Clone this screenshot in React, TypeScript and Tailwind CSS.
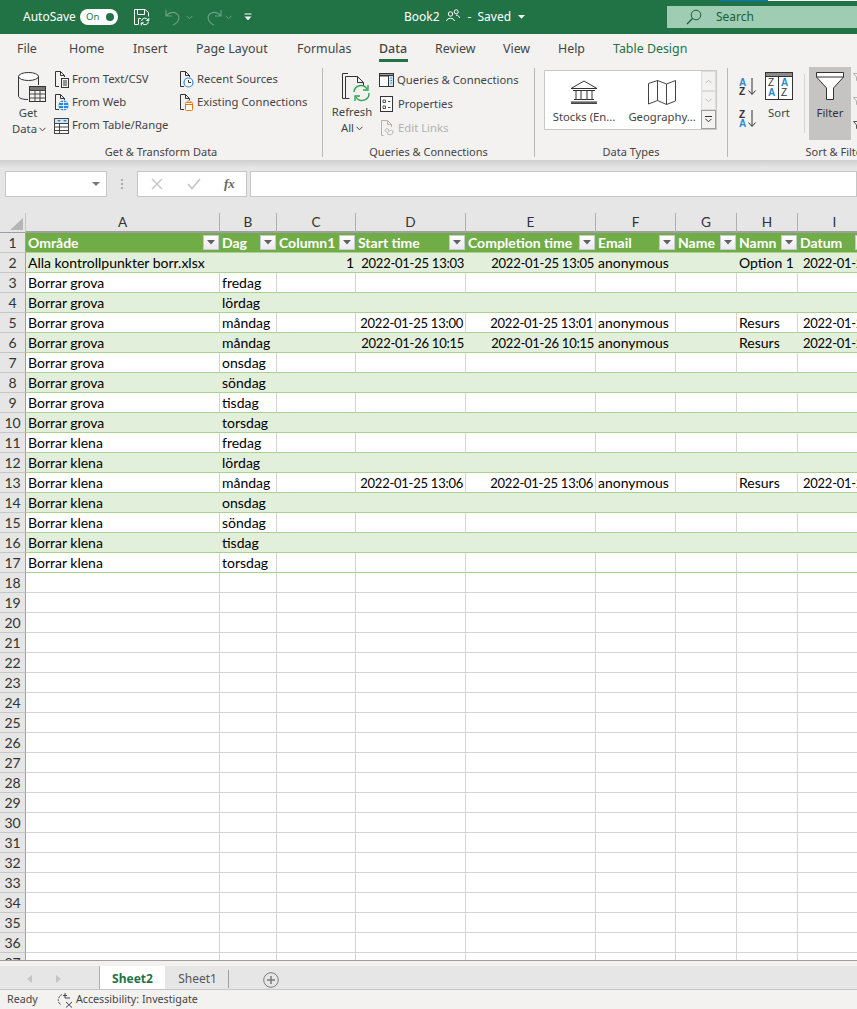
import type { ReactNode } from "react";

const COLS = "grid grid-cols-[26px_194px_57px_79px_110px_130px_80px_61px_61px_74px]";

type Row = string[];

const HEADERS = ["Område", "Dag", "Column1", "Start time", "Completion time", "Email", "Name", "Namn", "Datum"];
const LETTERS = ["A", "B", "C", "D", "E", "F", "G", "H", "I"];

const DATA: Row[] = [
  ["Alla kontrollpunkter borr.xlsx", "", "1", "2022-01-25 13:03", "2022-01-25 13:05", "anonymous", "", "Option 1", "2022-01-25"],
  ["Borrar grova", "fredag"],
  ["Borrar grova", "lördag"],
  ["Borrar grova", "måndag", "", "2022-01-25 13:00", "2022-01-25 13:01", "anonymous", "", "Resurs", "2022-01-25"],
  ["Borrar grova", "måndag", "", "2022-01-26 10:15", "2022-01-26 10:15", "anonymous", "", "Resurs", "2022-01-26"],
  ["Borrar grova", "onsdag"],
  ["Borrar grova", "söndag"],
  ["Borrar grova", "tisdag"],
  ["Borrar grova", "torsdag"],
  ["Borrar klena", "fredag"],
  ["Borrar klena", "lördag"],
  ["Borrar klena", "måndag", "", "2022-01-25 13:06", "2022-01-25 13:06", "anonymous", "", "Resurs", "2022-01-25"],
  ["Borrar klena", "onsdag"],
  ["Borrar klena", "söndag"],
  ["Borrar klena", "tisdag"],
  ["Borrar klena", "torsdag"],
];

const EMPTY_ROWS = Array.from({ length: 20 }, (_, i) => i + 18);

function Chevron({ className = "", color = "#444" }: { className?: string; color?: string }) {
  return (
    <svg width="7" height="5" viewBox="0 0 7 5" className={className}>
      <path d="M0.5 0.8 L3.5 3.8 L6.5 0.8" fill="none" stroke={color} strokeWidth="1" />
    </svg>
  );
}

function DocIcon({ children }: { children?: ReactNode }) {
  return (
    <svg width="15" height="17" viewBox="0 0 15 17" className="shrink-0">
      <path d="M1.5 15.5 V0.5 H6.5 L10.5 4.5 V6 M6.5 0.5 V4.5 H10.5 M1.5 15.5 H5" fill="none" stroke="#333" />
      {children}
    </svg>
  );
}

function TableIcon() {
  return (
    <svg width="15" height="16" viewBox="0 0 15 16" className="shrink-0">
      <rect x="0.5" y="0.5" width="14" height="15" fill="#fff" stroke="#444" />
      <rect x="1" y="1" width="13" height="4" fill="#d5e6f3" />
      <path d="M3 2 L5 4 L7 2 Z M9 2 L11 4 L13 2 Z" fill="#2b88d8" />
      <path d="M0.5 5.5 H14.5 M0.5 9 H14.5 M0.5 12.5 H14.5 M5.5 5.5 V15.5" stroke="#444" fill="none" />
    </svg>
  );
}

function SmallFunnel({ color }: { color: string }) {
  return (
    <svg width="9" height="8" viewBox="0 0 9 8">
      <path d="M0.5 0.5 H8.5 L5.5 4 V7.5 H3.5 V4 Z" fill="none" stroke={color} />
    </svg>
  );
}

function Cmd({ icon, label }: { icon: ReactNode; label: string }) {
  return (
    <div className="flex h-[23px] items-center gap-[3px] whitespace-nowrap text-[#444]">
      <span className="flex w-[15px] justify-center">{icon}</span>
      <span>{label}</span>
    </div>
  );
}

function Group({ label, className, children }: { label: string; className: string; children: ReactNode }) {
  return (
    <div className={`relative flex shrink-0 flex-col ${className}`}>
      <div className="flex h-[76px]">{children}</div>
      <div className="h-[17px] text-center text-[11px] leading-[17px] whitespace-nowrap text-[#444]">{label}</div>
    </div>
  );
}

function TabLabel({ w, children, active, accent }: { w: string; children: string; active?: boolean; accent?: boolean }) {
  return (
    <div className={`relative ${w} whitespace-nowrap leading-[30px] ${accent ? "text-[#217346]" : "text-[#444]"} ${active ? "font-medium text-[#333]" : ""}`}>
      {children}
      {active && <div className="absolute top-[25px] left-0 h-[3px] w-[29px] bg-[#217346]" />}
    </div>
  );
}

function FilterButton() {
  return (
    <div className="absolute top-[2px] right-[1px] flex h-[15px] w-[16px] items-center justify-center border border-[#c9c9d0] bg-gradient-to-b from-white to-[#e9e9ee]">
      <svg width="8" height="5" viewBox="0 0 8 5">
        <path d="M0 0 H8 L4 4.5 Z" fill="#5f5f5f" />
      </svg>
    </div>
  );
}

function HeaderCell({ children }: { children: string }) {
  return (
    <div className="relative h-[20px] border-b border-[#a9d08e] bg-[#70ad47] pl-[2px] font-['Lato',sans-serif] text-[14px] leading-[19px] font-bold whitespace-nowrap text-white">
      {children}
      <FilterButton />
    </div>
  );
}

function RowNumber({ n }: { n: number }) {
  return (
    <div className="h-[20px] border-r border-b border-r-[#9f9f9f] border-b-[#c6c6c6] bg-[#e6e6e6] text-center font-['Lato',sans-serif] text-[14px] leading-[19px] text-[#333]">
      {n}
    </div>
  );
}

function DataRow({ row, n }: { row: Row; n: number }) {
  const band = n % 2 === 0;
  return (
    <div className={COLS}>
      <RowNumber n={n} />
      {LETTERS.map((l, i) => {
        const isDate = i === 3 || i === 4 || i === 8;
        const alignRight = i === 2 || i === 3 || i === 4;
        return (
          <div
            key={l}
            className={`h-[20px] border-b border-b-[#a9d08e] px-[2px] font-['Lato',sans-serif] whitespace-nowrap text-black ${band ? "bg-[#e2efda]" : "border-r border-r-[#d4d4d4] bg-white"} ${alignRight ? "text-right" : "text-left"} ${isDate ? "text-[13px] leading-[20px] tracking-[-0.25px]" : "text-[14px] leading-[19px]"} ${i === 8 ? "pl-[5px]" : ""}`}
          >
            {row[i] ?? ""}
          </div>
        );
      })}
    </div>
  );
}

export default function App() {
  return (
    <div className="relative flex h-[1009px] w-[857px] flex-col overflow-hidden bg-[#f3f2f1] font-['Noto_Sans',sans-serif] text-[12px]">
      {/* title bar */}
      <div className="relative flex h-[34px] shrink-0 items-center bg-[#217346] pl-[23px] text-white">
        <span className="w-[57px] text-[12px]">AutoSave</span>
        <div className="flex h-[16px] w-[38px] items-center justify-between rounded-full bg-white pr-[4px] pl-[6px] text-[9.5px] text-[#217346]">
          <span>On</span>
          <span className="h-[8px] w-[8px] rounded-full bg-[#217346]" />
        </div>
        <svg width="18" height="18" viewBox="0 0 18 18" className="ml-[15px]">
          <path d="M5.5 16.5 H1.5 V1.5 H12 L15.5 4.5 V8.5" fill="none" stroke="#fff" />
          <path d="M4.5 1.5 V6.5 H11.5 V1.5 M5.5 16 V10.5 H8" fill="none" stroke="#fff" />
          <path d="M8.5 13 A3.5 3.5 0 0 1 15 12 M15.5 13.5 A3.5 3.5 0 0 1 9 15" fill="none" stroke="#fff" />
          <path d="M15.8 10 V12.6 H13.2 M8.2 17.5 V14.8 H10.8" fill="none" stroke="#fff" />
        </svg>
        <svg width="17" height="18" viewBox="0 0 17 18" className="ml-[14px]">
          <path d="M1 2 V8 H7 M1.5 7.5 C4 4.5 8 3.5 11.5 5.5 C15.5 8 14.5 14 8 17" fill="none" stroke="#6d9f83" strokeWidth="1.2" />
        </svg>
        <Chevron className="ml-[4px]" color="#6d9f83" />
        <svg width="17" height="18" viewBox="0 0 17 18" className="ml-[12px]">
          <path d="M16 2 V8 H10 M15.5 7.5 C13 4.5 9 3.5 5.5 5.5 C1.5 8 2.5 14 9 17" fill="none" stroke="#6d9f83" strokeWidth="1.2" />
        </svg>
        <Chevron className="ml-[3px]" color="#6d9f83" />
        <svg width="8" height="8" viewBox="0 0 8 8" className="ml-[12px]">
          <path d="M0.5 1 H7.5" stroke="#fff" />
          <path d="M0.5 3.5 H7.5 L4 7.2 Z" fill="#fff" />
        </svg>
        <span className="ml-[152px] text-[12px]">Book2</span>
        <svg width="14" height="13" viewBox="0 0 14 13" className="ml-[6px] -translate-y-[2px]">
          <circle cx="4.5" cy="5" r="2.2" fill="none" stroke="#fff" />
          <path d="M0.5 12 C1 8.5 8 8.5 8.5 12" fill="none" stroke="#fff" />
          <circle cx="10.2" cy="2.8" r="2" fill="none" stroke="#fff" />
          <path d="M10 6.2 C12 6 13.5 7.5 13.5 9" fill="none" stroke="#fff" />
        </svg>
        <span className="ml-[8px] text-[12px]">-</span>
        <span className="ml-[6px] text-[12px]">Saved</span>
        <svg width="7" height="4" viewBox="0 0 7 4" className="ml-[7px]">
          <path d="M0 0 H7 L3.5 3.8 Z" fill="#fff" />
        </svg>
        <div className="absolute top-[6px] right-0 flex h-[22px] w-[190px] items-center bg-[#9fcdb3] pl-[19px] text-[12px] text-[#1e5c3a]">
          <svg width="16" height="16" viewBox="0 0 16 16">
            <circle cx="10" cy="6" r="4.8" fill="none" stroke="#1e5c3a" />
            <path d="M6.5 9.5 L1 15" stroke="#1e5c3a" strokeWidth="1.2" />
          </svg>
          <span className="ml-[14px]">Search</span>
        </div>
        <div className="absolute top-0 right-0 flex h-[1px] w-[137px]">
          <div className="w-[48px] bg-[#0078d4]" />
          <div className="flex-1 bg-white" />
        </div>
      </div>

      {/* tabs */}
      <div className="flex h-[33px] shrink-0 pl-[17px] text-[12.4px]">
        <TabLabel w="w-[52px]">File</TabLabel>
        <TabLabel w="w-[64px]">Home</TabLabel>
        <TabLabel w="w-[63px]">Insert</TabLabel>
        <TabLabel w="w-[101px]">Page Layout</TabLabel>
        <TabLabel w="w-[82px]">Formulas</TabLabel>
        <TabLabel w="w-[56px]" active>Data</TabLabel>
        <TabLabel w="w-[68px]">Review</TabLabel>
        <TabLabel w="w-[55px]">View</TabLabel>
        <TabLabel w="w-[55px]">Help</TabLabel>
        <TabLabel w="w-[90px]" accent>Table Design</TabLabel>
      </div>

      {/* ribbon */}
      <div className="flex h-[93px] shrink-0 text-[11.3px] text-[#444]">
        <Group label="Get & Transform Data" className="w-[322px]">
          <div className="flex w-[54px] flex-col items-center pt-[5px] pl-[4px] leading-[16px]">
            <svg width="28" height="30" viewBox="0 0 28 30" className="translate-x-[3px]">
              <ellipse cx="10.5" cy="4.5" rx="10" ry="4" fill="#fff" stroke="#333" />
              <path d="M0.5 4.5 V24 C0.5 26 4 27.5 10 27.5 M20.5 4.5 V13" fill="none" stroke="#333" />
              <rect x="11.5" y="14.5" width="16" height="15" fill="#f3f2f1" stroke="#333" />
              <rect x="12" y="15" width="15" height="3" fill="#777" />
              <path d="M11.5 18.5 H27.5 M11.5 22 H27.5 M11.5 26 H27.5 M17 18.5 V29.5 M22 18.5 V29.5" fill="none" stroke="#444" />
            </svg>
            <div className="mt-[3px] -translate-x-[1px]">Get</div>
            <div className="flex items-center gap-[2px]">Data<Chevron /></div>
          </div>
          <div className="w-[125px] pt-[1px]">
            <Cmd label="From Text/CSV" icon={<DocIcon><rect x="7.5" y="7.5" width="7" height="9" fill="#f3f2f1" stroke="#333" /><path d="M9 10 H13 M9 12 H13 M9 14 H13" stroke="#333" /></DocIcon>} />
            <Cmd label="From Web" icon={<DocIcon><circle cx="9.5" cy="11.5" r="5" fill="#2b88d8" /><path d="M4.5 11.5 H14.5 M9.5 6.5 V16.5 M6 8.5 H13 M6 14.5 H13" stroke="#fff" strokeWidth="0.8" /></DocIcon>} />
            <Cmd label="From Table/Range" icon={<TableIcon />} />
          </div>
          <div className="flex-1 pt-[1px]">
            <Cmd label="Recent Sources" icon={<DocIcon><circle cx="9.5" cy="11.5" r="4.5" fill="#fff" stroke="#2b88d8" strokeWidth="1.2" /><path d="M9.5 9 V11.5 H12" fill="none" stroke="#333" /></DocIcon>} />
            <Cmd label="Existing Connections" icon={<DocIcon><rect x="6.5" y="8.5" width="7" height="8" rx="1" fill="#fff" stroke="#e8760e" /><path d="M6.5 10.5 H13.5 M8 8.5 C8 6 12 6 12 8.5" fill="none" stroke="#e8760e" /></DocIcon>} />
          </div>
        </Group>
        <div className="mt-[1px] mb-[3px] w-[1px] shrink-0 bg-[#b8b8b8]" />
        <Group label="Queries & Connections" className="w-[211px]">
          <div className="flex w-[56px] flex-col items-center pt-[5px] pl-[2px] leading-[16px]">
            <svg width="30" height="30" viewBox="0 0 30 30" className="translate-x-[4px]">
              <path d="M4.5 26.5 H1.5 V1.5 H7" fill="none" stroke="#333" />
              <path d="M8.5 26.5 H4.5 V4.5 H16.5 L22.5 10.5 V14 M16.5 4.5 V10.5 H22.5" fill="none" stroke="#333" />
              <path d="M13 20 A7 7 0 0 1 26 17 M28 21 A7 7 0 0 1 15 25" fill="none" stroke="#2ea44f" strokeWidth="1.4" />
              <path d="M27 13 V18 H22 M14 29 V24 H19" fill="none" stroke="#2ea44f" strokeWidth="1.4" />
            </svg>
            <div className="mt-[2px]">Refresh</div>
            <div className="flex items-center gap-[2px]">All<Chevron /></div>
          </div>
          <div className="flex-1 pt-[1px] leading-[24px]">
            <div className="flex h-[24px] items-center gap-[3px] whitespace-nowrap">
              <svg width="15" height="14" viewBox="0 0 15 14">
                <rect x="0.5" y="0.5" width="14" height="13" fill="#fff" stroke="#333" />
                <path d="M0.5 2.5 H14.5" stroke="#333" strokeWidth="2" />
                <rect x="10" y="3" width="4" height="10" fill="#cfe4f5" />
                <path d="M11.5 5 H13 M11.5 7.5 H13 M11.5 10 H13" stroke="#2b88d8" />
                <path d="M9.5 3 V13.5" stroke="#333" />
              </svg>
              <span>Queries & Connections</span>
            </div>
            <div className="flex h-[24px] items-center gap-[4px] whitespace-nowrap">
              <svg width="14" height="16" viewBox="0 0 14 16" className="ml-[1px]">
                <rect x="0.5" y="0.5" width="12" height="15" fill="#fff" stroke="#333" />
                <path d="M3 4 H5.5 V6.5 H3 Z M3 10 H5.5 V12.5 H3 Z M8 5.5 H10.5 M8 11.5 H10.5" fill="none" stroke="#555" />
              </svg>
              <span>Properties</span>
            </div>
            <div className="flex h-[24px] items-center gap-[3px] whitespace-nowrap text-[#b1b1b1]">
              <svg width="15" height="16" viewBox="0 0 15 16" className="ml-[1px]">
                <path d="M3.5 15.5 H1.5 V0.5 H7.5 L11.5 4.5 V7 M7.5 0.5 V4.5 H11.5" fill="none" stroke="#b1b1b1" />
                <path d="M5 11 C5 8 9 8 9 11 C9 13 6 13 6 11 M7 13.5 C9 15.5 13 15 13 12 C13 10 11 10 10.5 10.5" fill="none" stroke="#b1b1b1" />
              </svg>
              <span>Edit Links</span>
            </div>
          </div>
        </Group>
        <div className="mt-[1px] mb-[3px] w-[1px] shrink-0 bg-[#b8b8b8]" />
        <Group label="Data Types" className="w-[192px]">
          <div className="mt-[3px] ml-[9px] flex h-[60px] w-[173px] border border-[#c8c8c8] bg-white">
            <div className="flex w-[79px] flex-col items-center pt-[9px]">
              <svg width="28" height="25" viewBox="0 0 28 25">
                <path d="M1 8.5 L14 1 L27 8.5 Z" fill="none" stroke="#333" />
                <path d="M3 10.5 H25 M4 19.5 H24 M1 22 H27 M6 11 V19 M11 11 V19 M17 11 V19 M22 11 V19" fill="none" stroke="#333" />
                <path d="M1 23.2 H27" stroke="#333" strokeWidth="1.4" />
              </svg>
              <div className="mt-[4px] whitespace-nowrap">Stocks (En...</div>
            </div>
            <div className="flex w-[79px] flex-col items-center pt-[9px]">
              <svg width="28" height="25" viewBox="0 0 28 25">
                <path d="M0.5 3.5 L9.5 0.5 L18.5 4 L27.5 0.5 V21 L18.5 24.5 L9.5 20.5 L0.5 24 Z M9.5 0.5 V20.5 M18.5 4 V24.5" fill="none" stroke="#444" />
              </svg>
              <div className="mt-[4px] whitespace-nowrap">Geography...</div>
            </div>
            <div className="ml-auto flex w-[15px] flex-col">
              <div className="flex h-[20px] items-center justify-center border border-[#dcdcdc] bg-[#f3f2f1]">
                <Chevron className="rotate-180" color="#bdbdbd" />
              </div>
              <div className="flex h-[19px] items-center justify-center border border-[#dcdcdc] bg-[#f3f2f1]">
                <Chevron color="#bdbdbd" />
              </div>
              <div className="flex h-[19px] flex-col items-center justify-center gap-[1px] border border-[#9f9f9f] bg-[#f3f2f1]">
                <div className="h-[1px] w-[7px] bg-[#333]" />
                <Chevron color="#333" />
              </div>
            </div>
          </div>
        </Group>
        <div className="mt-[1px] mb-[3px] w-[1px] shrink-0 bg-[#b8b8b8]" />
        <Group label="Sort & Filter" className="w-[216px]">
          <div className="flex w-[33px] flex-col pt-[10px] pl-[10px]">
            <svg width="19" height="19" viewBox="0 0 19 19">
              <text x="1" y="8.5" fontSize="10" fontWeight="700" fill="#2b88d8" fontFamily="Liberation Sans">A</text>
              <text x="1" y="17.5" fontSize="10" fontWeight="700" fill="#333" fontFamily="Liberation Sans">Z</text>
              <path d="M14 1 V17 M10.5 13.5 L14 17.5 L17.5 13.5" fill="none" stroke="#333" />
            </svg>
            <svg width="19" height="19" viewBox="0 0 19 19" className="mt-[13px]">
              <text x="1" y="8.5" fontSize="10" fontWeight="700" fill="#333" fontFamily="Liberation Sans">Z</text>
              <text x="1" y="17.5" fontSize="10" fontWeight="700" fill="#2b88d8" fontFamily="Liberation Sans">A</text>
              <path d="M14 1 V17 M10.5 13.5 L14 17.5 L17.5 13.5" fill="none" stroke="#333" />
            </svg>
          </div>
          <div className="flex w-[36px] flex-col items-center pt-[5px] leading-[16px]">
            <svg width="28" height="28" viewBox="0 0 28 28">
              <rect x="0.5" y="0.5" width="27" height="27" fill="#fff" stroke="#333" />
              <rect x="0.5" y="0.5" width="27" height="4" fill="#8a8a8a" stroke="#333" />
              <path d="M13.5 4.5 V27.5" stroke="#333" />
              <text x="3" y="14" fontSize="10" fill="#333" fontFamily="Liberation Sans">Z</text>
              <text x="3" y="24" fontSize="10" fontWeight="700" fill="#2b88d8" fontFamily="Liberation Sans">A</text>
              <text x="16" y="14" fontSize="10" fontWeight="700" fill="#2b88d8" fontFamily="Liberation Sans">A</text>
              <text x="16" y="24" fontSize="10" fill="#333" fontFamily="Liberation Sans">Z</text>
            </svg>
            <div className="mt-[5px]">Sort</div>
          </div>
          <div className="mt-[7px] ml-[7px] h-[59px] w-[1px] bg-[#d4d4d4]" />
          <div className="ml-[4px] flex h-[73px] w-[42px] flex-col items-center bg-[#c5c4c3] pt-[5px] leading-[16px] text-[#333]">
            <svg width="28" height="28" viewBox="0 0 28 28">
              <path d="M0.5 0.5 H27.5 V5 L17.5 16 V27.5 H10.5 V16 L0.5 5 Z M0.5 5 H27.5" fill="#fff" stroke="#333" />
            </svg>
            <div className="mt-[5px]">Filter</div>
          </div>
          <div className="ml-[2px] flex flex-col gap-[16px] pt-[6px]">
            <SmallFunnel color="#b1b1b1" />
            <SmallFunnel color="#b1b1b1" />
            <SmallFunnel color="#555" />
          </div>
        </Group>
      </div>

      {/* formula bar */}
      <div className="flex h-[53px] shrink-0 items-start bg-gradient-to-b from-[#cfcfcf] via-[#e6e6e6] via-[15%] to-[#e6e6e6] pt-[11px] pl-[5px]">
        <div className="flex h-[26px] w-[102px] items-center justify-end border border-[#c6c6c6] bg-white pr-[6px]">
          <svg width="8" height="4" viewBox="0 0 8 4">
            <path d="M0 0 H8 L4 4 Z" fill="#777" />
          </svg>
        </div>
        <div className="flex h-[26px] w-[30px] flex-col items-center justify-center gap-[2px]">
          <div className="h-[2px] w-[2px] bg-[#aaa]" />
          <div className="h-[2px] w-[2px] bg-[#aaa]" />
          <div className="h-[2px] w-[2px] bg-[#aaa]" />
        </div>
        <div className="flex h-[26px] w-[110px] items-center border border-[#c6c6c6] bg-white pl-[13px]">
          <svg width="12" height="12" viewBox="0 0 12 12">
            <path d="M1 1 L11 11 M11 1 L1 11" stroke="#c4c4c4" strokeWidth="1.4" />
          </svg>
          <svg width="14" height="12" viewBox="0 0 14 12" className="ml-[24px]">
            <path d="M1 6 L5 10.5 L13 1" fill="none" stroke="#c4c4c4" strokeWidth="1.6" />
          </svg>
          <span className="ml-[23px] font-['Liberation_Serif',serif] text-[13px] font-bold text-[#666] italic">fx</span>
        </div>
        <div className="ml-[3px] h-[26px] flex-1 border border-[#c6c6c6] bg-white" />
      </div>

      {/* sheet */}
      <div className="h-[747px] shrink-0 overflow-hidden bg-white">
        <div className={COLS}>
          <div className="relative h-[20px] border-r border-b border-r-[#c6c6c6] border-b-[#9f9f9f] bg-[#e6e6e6]">
            <svg width="13" height="12" viewBox="0 0 13 12" className="absolute top-[5px] left-[10px]">
              <path d="M13 0 V12 H0 Z" fill="#b5b5b5" />
            </svg>
          </div>
          {LETTERS.map((l) => (
            <div key={l} className="h-[20px] border-r border-b-2 border-r-[#b0b0b0] border-b-[#9f9f9f] bg-[#e6e6e6] text-center font-['Lato',sans-serif] text-[13.6px] leading-[18px] text-[#333]">
              {l}
            </div>
          ))}
        </div>
        <div className={COLS}>
          <RowNumber n={1} />
          {HEADERS.map((h) => (
            <HeaderCell key={h}>{h}</HeaderCell>
          ))}
        </div>
        {DATA.map((row, i) => (
          <DataRow key={i} row={row} n={i + 2} />
        ))}
        {EMPTY_ROWS.map((n) => (
          <div key={n} className={COLS}>
            <RowNumber n={n} />
            {LETTERS.map((l) => (
              <div key={l} className="h-[20px] border-r border-b border-[#d4d4d4]" />
            ))}
          </div>
        ))}
      </div>

      {/* sheet tabs */}
      <div className="h-[1px] shrink-0 bg-[#9f9f9f]" />
      <div className="h-[5px] shrink-0 bg-[#f3f2f1]" />
      <div className="flex h-[23px] shrink-0 items-stretch bg-[#e6e6e6] text-[12px]">
        <div className="flex w-[100px] items-center border-r border-[#b0b0b0] pt-[2px] pl-[27px]">
          <svg width="5" height="8" viewBox="0 0 5 8"><path d="M5 0 V8 L0 4 Z" fill="#c4c4c4" /></svg>
          <svg width="5" height="8" viewBox="0 0 5 8" className="ml-[24px]"><path d="M0 0 V8 L5 4 Z" fill="#c4c4c4" /></svg>
        </div>
        <div className="flex w-[65px] items-center justify-center bg-white pt-[2px] font-bold text-[#217346]">Sheet2</div>
        <div className="mt-[4px] mb-[1px] flex w-[64px] items-center justify-center border-r border-[#9f9f9f] pl-[2px] text-[#555]">Sheet1</div>
        <svg width="16" height="16" viewBox="0 0 16 16" className="mt-[6px] ml-[34px]">
          <circle cx="8" cy="8" r="7.3" fill="none" stroke="#7a7a7a" />
          <path d="M8 4 V12 M4 8 H12" stroke="#7a7a7a" strokeWidth="1.5" />
        </svg>
      </div>

      {/* status bar */}
      <div className="flex h-[20px] shrink-0 items-center border-t border-[#c6c6c6] bg-[#f3f2f1] pl-[7px] text-[10.7px] text-[#444]">
        <span className="w-[50px]">Ready</span>
        <svg width="16" height="16" viewBox="0 0 16 16">
          <path d="M5 2.5 A6 6 0 0 0 4 13" fill="none" stroke="#444" strokeDasharray="2 1" />
          <path d="M8 1 V6 M6 3.5 H10 M8 6 L13 6 M9 10 L15 15.5 M15 10 L9 15.5" fill="none" stroke="#444" />
        </svg>
        <span className="ml-[3px]">Accessibility: Investigate</span>
      </div>
    </div>
  );
}
